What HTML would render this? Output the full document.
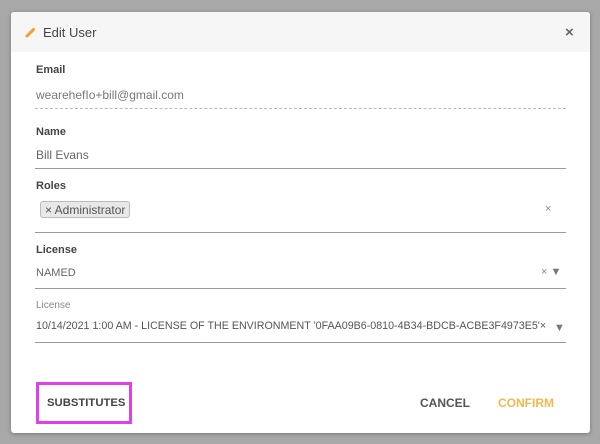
<!DOCTYPE html>
<html><head><style>
*{margin:0;padding:0;box-sizing:border-box}
body{width:600px;height:444px;background:#a8a8a8;font-family:"Liberation Sans",sans-serif;position:relative;overflow:hidden}
.dlg{position:absolute;left:11px;top:12px;width:579px;height:421px;background:#fff;border-radius:3px;box-shadow:0 1px 4px rgba(0,0,0,.3)}
.hdr{position:absolute;left:0;top:0;width:100%;height:40px;background:#f6f6f6;border-radius:3px 3px 0 0}
.t{position:absolute;white-space:nowrap}
.lbl{font-size:11px;font-weight:bold;color:#444}
.val{font-size:12px;color:#666}
.ln{position:absolute;left:24px;width:531px;height:0;border-top:1px solid #999}
</style></head><body>
<div class="dlg">
<div class="hdr"></div>
<svg class="t" style="left:14px;top:15px" width="11" height="11" viewBox="0 0 11 11"><path d="M2 9 L8.5 2.5" stroke="#f0a030" stroke-width="3" stroke-linecap="round"/></svg>
<div class="t" style="left:32px;top:13px;font-size:13px;color:#444">Edit User</div>
<div class="t" style="left:554px;top:12px;font-size:15px;font-weight:bold;color:#666">×</div>

<div class="t lbl" style="left:25px;top:52px">Email</div>
<div class="t val" style="left:25px;top:76px;color:#777">wearehefIo+bill@gmail.com</div>
<div class="ln" style="top:96px;border-top:1px dashed #bbb"></div>

<div class="t lbl" style="left:25px;top:114px">Name</div>
<div class="t val" style="left:25px;top:136px">Bill Evans</div>
<div class="ln" style="top:156px"></div>

<div class="t lbl" style="left:25px;top:168px">Roles</div>
<div class="t" style="left:29px;top:189px;height:17px;padding:1px 4px;border:1px solid #bbb;border-radius:3px;background:#e8e8e8;font-size:12px;color:#555">× Administrator</div>
<div class="t" style="left:534px;top:191px;font-size:11px;color:#888">×</div>
<div class="ln" style="top:220px"></div>

<div class="t lbl" style="left:25px;top:232px">License</div>
<div class="t val" style="left:25px;top:255px;font-size:11px">NAMED</div>
<div class="t" style="left:530px;top:254px;font-size:11px;color:#888">× <span style="color:#777">▼</span></div>
<div class="ln" style="top:276px"></div>

<div class="t" style="left:25px;top:288px;font-size:10px;color:#888">License</div>
<div class="t val" style="left:25px;top:308px;font-size:10.7px;color:#555">10/14/2021 1:00 AM - LICENSE OF THE ENVIRONMENT '0FAA09B6-0810-4B34-BDCB-ACBE3F4973E5'×</div>
<div class="t" style="left:543px;top:310px;font-size:11px;color:#777">▼</div>
<div class="ln" style="top:330px"></div>

<div class="t" style="left:25px;top:370px;width:96px;height:42px;border:3px solid #e040e8"></div>
<div class="t" style="left:36px;top:385px;font-size:11.3px;font-weight:bold;color:#444">SUBSTITUTES</div>
<div class="t" style="left:409px;top:384px;font-size:12px;font-weight:bold;color:#555">CANCEL</div>
<div class="t" style="left:487px;top:384px;font-size:12px;font-weight:bold;color:#f0b850">CONFIRM</div>
</div>
</body></html>
